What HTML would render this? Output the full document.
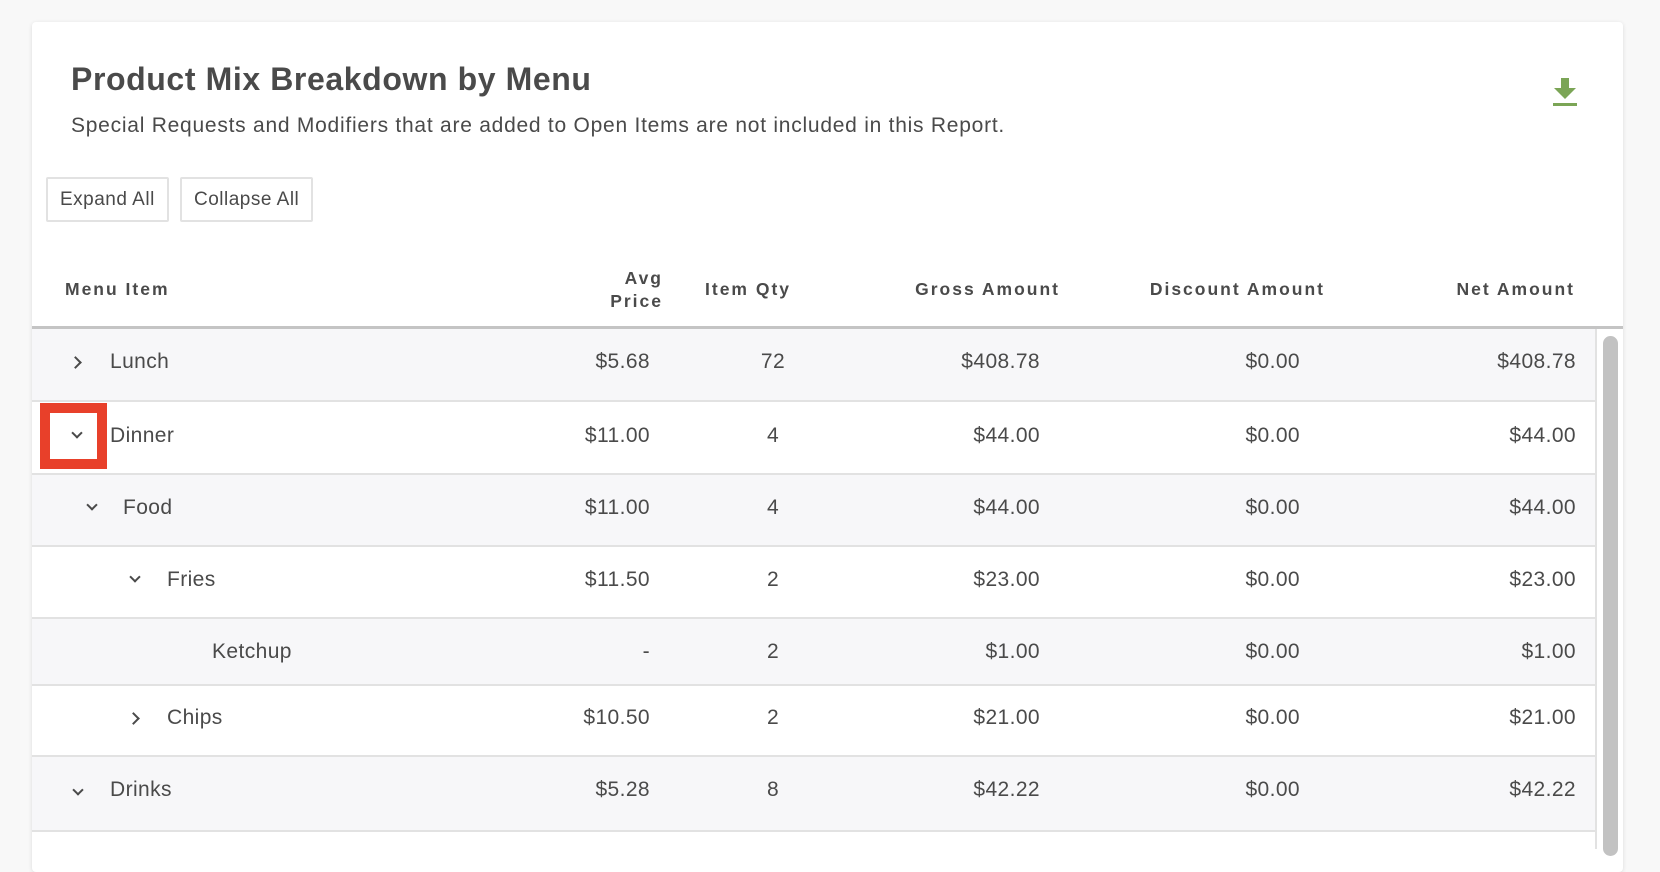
<!DOCTYPE html>
<html><head><meta charset="utf-8">
<style>
*{margin:0;padding:0;box-sizing:border-box}
body{width:1660px;height:838px;background:#f8f8f8;font-family:"Liberation Sans",sans-serif;color:#4a4a4a;position:relative;overflow:hidden}
.card{position:absolute;left:32px;top:22px;width:1591px;height:850px;background:#fff;border-radius:4px;box-shadow:0 1px 4px rgba(0,0,0,.12)}
.a{position:absolute;white-space:nowrap}
.title{left:71px;top:61px;font-size:32px;font-weight:bold;color:#4a4a4a;letter-spacing:0.6px}
.sub{left:71px;top:114px;font-size:21px;color:#4a4a4a;letter-spacing:0.75px}
.btn{top:177px;height:45px;border:2px solid #e2e2e2;border-radius:2px;font-size:19px;line-height:41px;padding:0 12px;background:#fff;letter-spacing:0.5px}
.hd{font-size:17.5px;font-weight:bold;letter-spacing:2px;color:#4a4a4a}
.row{position:absolute;left:32px;width:1563px;border-bottom:2px solid #e2e2e2}
.g{background:#f7f7f9}
.t{font-size:21px;position:absolute;white-space:nowrap;letter-spacing:0.4px}
.r{text-align:right}
.c{text-align:center}
.chev{position:absolute;width:9px;height:9px;border-right:2px solid #4a4a4a;border-bottom:2px solid #4a4a4a}
</style></head><body>
<div class="card"></div>
<div class="a title">Product Mix Breakdown by Menu</div>
<div class="a sub">Special Requests and Modifiers that are added to Open Items are not included in this Report.</div>
<svg class="a" style="left:1552px;top:77px" width="26" height="30" viewBox="0 0 26 30"><rect x="9" y="1" width="8" height="10" fill="#7ba556"/><polygon points="2,11 24,11 13,22" fill="#7ba556"/><rect x="1" y="26" width="24" height="3" fill="#7ba556"/></svg>
<div class="a btn" style="left:46px">Expand All</div>
<div class="a btn" style="left:180px">Collapse All</div>

<div class="a hd" style="left:65px;top:279px">Menu Item</div>
<div class="a hd r" style="left:560px;width:103px;top:267px;line-height:23px">Avg<br>Price</div>
<div class="a hd" style="left:705px;top:279px">Item Qty</div>
<div class="a hd r" style="left:860px;width:200px;top:279px">Gross Amount</div>
<div class="a hd r" style="left:1100px;width:225px;top:279px">Discount Amount</div>
<div class="a hd r" style="left:1380px;width:195px;top:279px">Net Amount</div>
<div class="a" style="left:32px;top:326px;width:1591px;height:3px;background:#c4c4c4"></div>
<div class="a" style="left:1595px;top:329px;width:2px;height:520px;background:#e2e2e2"></div>
<div class="a" style="left:1603px;top:336px;width:15px;height:520px;border-radius:8px;background:#c2c2c2"></div>

<div class="row g" style="top:329px;height:73px"></div>
<div class="row" style="top:402px;height:73px"></div>
<div class="row g" style="top:475px;height:72px"></div>
<div class="row" style="top:547px;height:72px"></div>
<div class="row g" style="top:619px;height:67px"></div>
<div class="row" style="top:686px;height:71px"></div>
<div class="row g" style="top:757px;height:75px"></div>

<div class="chev" style="left:71px;top:358px;transform:rotate(-45deg)"></div>
<div class="t" style="left:110px;top:350px">Lunch</div>
<div class="t r" style="left:550px;width:100px;top:350px">$5.68</div>
<div class="t c" style="left:723px;width:100px;top:350px">72</div>
<div class="t r" style="left:900px;width:140px;top:350px">$408.78</div>
<div class="t r" style="left:1160px;width:140px;top:350px">$0.00</div>
<div class="t r" style="left:1436px;width:140px;top:350px">$408.78</div>

<div class="a" style="left:40px;top:403px;width:67px;height:66px;border:10px solid #e8402a"></div>
<div class="chev" style="left:73px;top:429px;width:8px;height:8px;transform:rotate(45deg)"></div>
<div class="t" style="left:110px;top:424px">Dinner</div>
<div class="t r" style="left:550px;width:100px;top:424px">$11.00</div>
<div class="t c" style="left:723px;width:100px;top:424px">4</div>
<div class="t r" style="left:900px;width:140px;top:424px">$44.00</div>
<div class="t r" style="left:1160px;width:140px;top:424px">$0.00</div>
<div class="t r" style="left:1436px;width:140px;top:424px">$44.00</div>

<div class="chev" style="left:88px;top:501px;width:8px;height:8px;transform:rotate(45deg)"></div>
<div class="t" style="left:123px;top:496px">Food</div>
<div class="t r" style="left:550px;width:100px;top:496px">$11.00</div>
<div class="t c" style="left:723px;width:100px;top:496px">4</div>
<div class="t r" style="left:900px;width:140px;top:496px">$44.00</div>
<div class="t r" style="left:1160px;width:140px;top:496px">$0.00</div>
<div class="t r" style="left:1436px;width:140px;top:496px">$44.00</div>

<div class="chev" style="left:131px;top:573px;width:8px;height:8px;transform:rotate(45deg)"></div>
<div class="t" style="left:167px;top:568px">Fries</div>
<div class="t r" style="left:550px;width:100px;top:568px">$11.50</div>
<div class="t c" style="left:723px;width:100px;top:568px">2</div>
<div class="t r" style="left:900px;width:140px;top:568px">$23.00</div>
<div class="t r" style="left:1160px;width:140px;top:568px">$0.00</div>
<div class="t r" style="left:1436px;width:140px;top:568px">$23.00</div>

<div class="t" style="left:212px;top:640px">Ketchup</div>
<div class="t r" style="left:550px;width:100px;top:640px">-</div>
<div class="t c" style="left:723px;width:100px;top:640px">2</div>
<div class="t r" style="left:900px;width:140px;top:640px">$1.00</div>
<div class="t r" style="left:1160px;width:140px;top:640px">$0.00</div>
<div class="t r" style="left:1436px;width:140px;top:640px">$1.00</div>

<div class="chev" style="left:129px;top:714px;transform:rotate(-45deg)"></div>
<div class="t" style="left:167px;top:706px">Chips</div>
<div class="t r" style="left:550px;width:100px;top:706px">$10.50</div>
<div class="t c" style="left:723px;width:100px;top:706px">2</div>
<div class="t r" style="left:900px;width:140px;top:706px">$21.00</div>
<div class="t r" style="left:1160px;width:140px;top:706px">$0.00</div>
<div class="t r" style="left:1436px;width:140px;top:706px">$21.00</div>

<div class="chev" style="left:74px;top:786px;width:8px;height:8px;transform:rotate(45deg)"></div>
<div class="t" style="left:110px;top:778px">Drinks</div>
<div class="t r" style="left:550px;width:100px;top:778px">$5.28</div>
<div class="t c" style="left:723px;width:100px;top:778px">8</div>
<div class="t r" style="left:900px;width:140px;top:778px">$42.22</div>
<div class="t r" style="left:1160px;width:140px;top:778px">$0.00</div>
<div class="t r" style="left:1436px;width:140px;top:778px">$42.22</div>
</body></html>
